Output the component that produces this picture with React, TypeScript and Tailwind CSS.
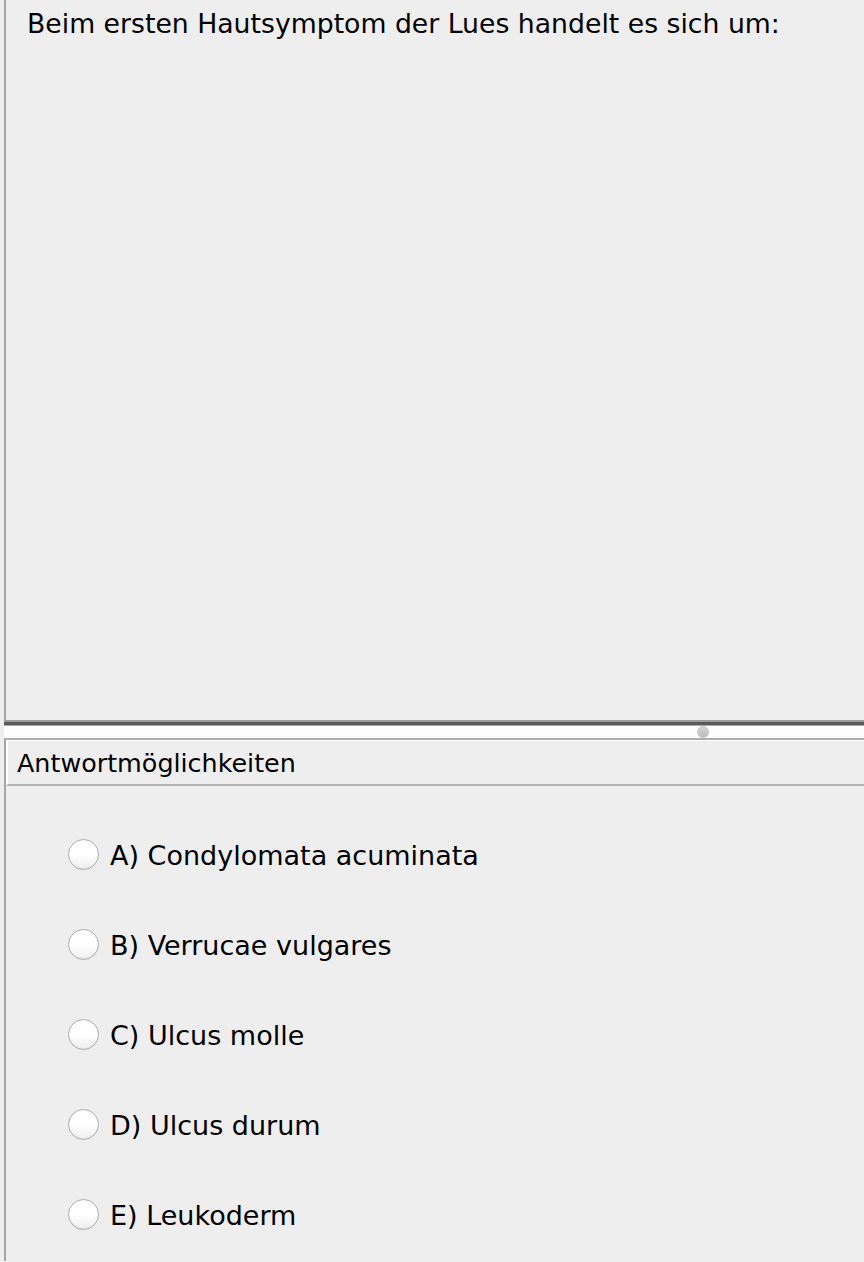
import React from 'react';

const options = [
  'A) Condylomata acuminata',
  'B) Verrucae vulgares',
  'C) Ulcus molle',
  'D) Ulcus durum',
  'E) Leukoderm',
];

function Radio() {
  return (
    <span className="block w-[31px] h-[31px] rounded-full border border-[#adadad] bg-gradient-to-b from-white via-white to-[#efefef] shadow-[inset_0_-1px_1px_rgba(0,0,0,0.06)]" />
  );
}

export default function App() {
  return (
    <div
      className="w-[864px] h-[1262px] overflow-hidden bg-[#eeeeee] text-black pl-[4px]"
      style={{ fontFamily: '"DejaVu Sans", "Liberation Sans", sans-serif' }}
    >
      {/* Question panel */}
      <div className="h-[720px] border-l-2 border-[#a6a6a6] pt-[11px] pl-[21px]">
        <p className="text-[26.7px] leading-none whitespace-nowrap">
          Beim ersten Hautsymptom der Lues handelt es sich um:
        </p>
      </div>

      {/* Split divider */}
      <div className="h-[2px] bg-[#9c9c9c]" />
      <div className="h-[3px] bg-[#5a5a5a]" />
      <div className="h-[1px] bg-[#a9a9a9]" />
      <div className="relative h-[12px] bg-[#fcfcfc]">
        <span className="absolute left-[693px] top-0 w-[12px] h-[12px] rounded-full bg-gradient-to-b from-[#d4d4d4] to-[#bdbdbd] border border-[#c6c6c6]" />
      </div>
      <div className="h-[2px] bg-[#adadad]" />

      {/* Answers panel */}
      <div className="h-[521px] border-l-2 border-[#a6a6a6]">
        <div className="h-[1px] bg-white" />
        <div className="h-[45px] flex items-center border-l-2 border-white pl-[9px] pt-[3px] border-b-2 border-b-[#b3b3b3]">
          <span className="text-[25.4px] leading-none">Antwortmöglichkeiten</span>
        </div>
        <div className="pt-[23px] pl-[62px]">
          {options.map((o) => (
            <div key={o} className="h-[90px] flex items-center gap-[11px]">
              <Radio />
              <span className="text-[27px] leading-none whitespace-nowrap pt-[2px]">{o}</span>
            </div>
          ))}
        </div>
      </div>
    </div>
  );
}
